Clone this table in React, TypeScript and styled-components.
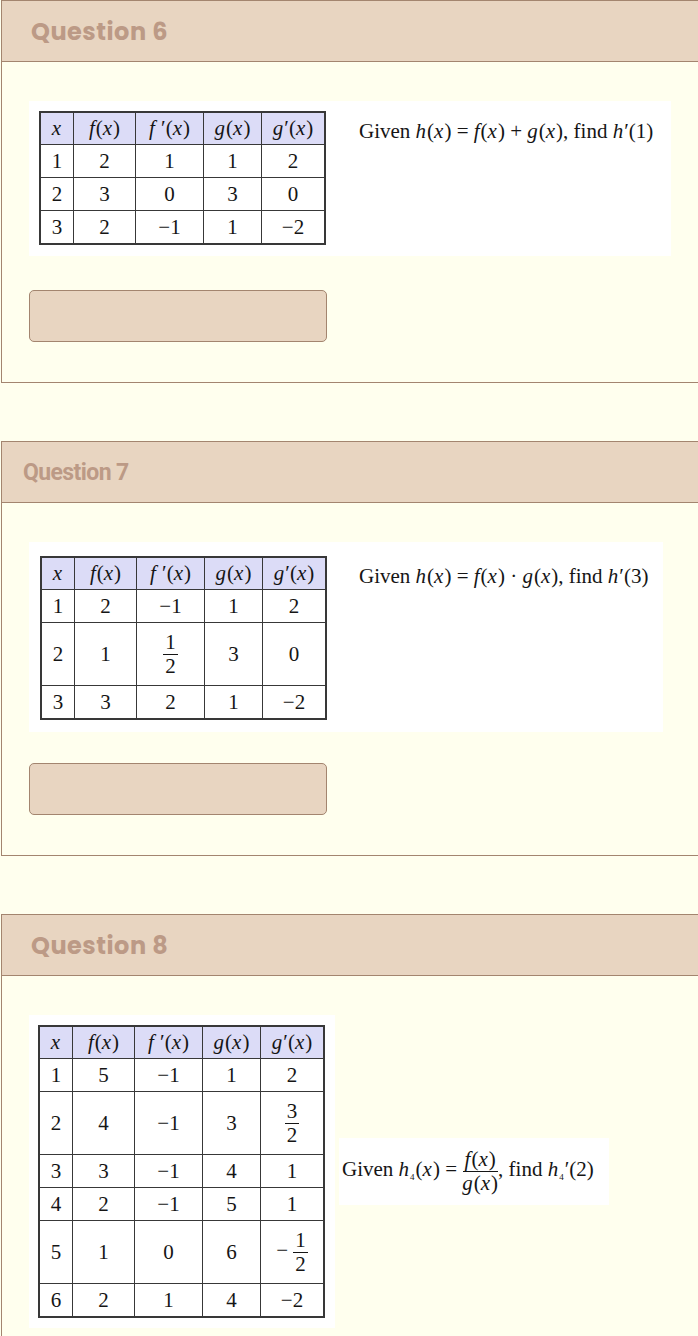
import React from "react";
import styled, { createGlobalStyle } from "styled-components";

type Cell = React.ReactNode;

const GlobalStyle = createGlobalStyle`
  html, body {
    margin: 0;
    padding: 0;
    background: #ffffee;
    overflow-x: hidden;
  }
`;

const Page = styled.main`
  width: 698px;
  background: #ffffee;
`;

const Card = styled.section`
  margin: 0 0 58px 1px;
  border: 1px solid #a3856f;
  border-right: none;
`;

const Header = styled.header<{ $alt?: boolean }>`
  height: 60px;
  display: flex;
  align-items: center;
  padding-left: ${(p) => (p.$alt ? 21 : 29)}px;
  background: #e8d5c1;
  border-bottom: 1px solid #a3856f;
`;

const Title = styled.h2<{ $alt?: boolean }>`
  margin: 0;
  font-family: ${(p) => (p.$alt ? '"Roboto"' : '"Poppins", "Open Sans"')}, sans-serif;
  font-weight: 700;
  font-size: ${(p) => (p.$alt ? 23 : 24)}px;
  letter-spacing: ${(p) => (p.$alt ? -0.6 : 0.5)}px;
  color: #bc9a86;
`;

const Body = styled.div`
  padding: 39px 0 40px 27px;
`;

const Figure = styled.div<{ $w: number; $pad: string }>`
  display: flex;
  align-items: flex-start;
  width: ${(p) => p.$w}px;
  padding: ${(p) => p.$pad};
  box-sizing: border-box;
  background: #ffffff;
`;

const SplitRow = styled.div`
  display: flex;
  align-items: center;
  gap: 4px;
`;

const TableBox = styled.div`
  padding: 10px 10px 10px 9px;
  background: #ffffff;
`;

const TextBox = styled.div`
  display: flex;
  align-items: center;
  width: 270px;
  height: 67px;
  padding-left: 3px;
  box-sizing: border-box;
  background: #ffffff;
`;

const Grid = styled.table`
  border-collapse: collapse;
  table-layout: fixed;
  border: 2px solid #383838;
  color: #151515;
`;

const cellFont = `
  font-family: "Liberation Serif", "Times New Roman", serif;
  font-size: 21px;
  color: #151515;
`;

const Th = styled.th<{ $w: number }>`
  ${cellFont}
  width: ${(p) => p.$w}px;
  height: 31px;
  padding: 0;
  font-weight: 400;
  text-align: center;
  background: #dcdcf7;
  border: 1px solid #383838;
`;

const Td = styled.td<{ $tall?: boolean }>`
  ${cellFont}
  height: ${(p) => (p.$tall ? 62 : 32)}px;
  padding: 0;
  text-align: center;
  border: 1px solid #383838;
`;

const I = styled.i`
  font-style: italic;
  padding-right: 1px;
`;

const Frac = styled.span`
  display: inline-flex;
  flex-direction: column;
  align-items: center;
  vertical-align: middle;
  line-height: 23px;
`;

const Num = styled.span`
  padding: 0 2px;
  border-bottom: 1px solid currentColor;
`;

const Statement = styled.p<{ $top?: number; $left?: number }>`
  margin: ${(p) => p.$top ?? 0}px 0 0 ${(p) => p.$left ?? 0}px;
  font-family: "Liberation Serif", "Times New Roman", serif;
  font-size: 21px;
  line-height: 24px;
  color: #151515;
  white-space: nowrap;
`;

const Sub = styled.sub`
  font-size: 9px;
  vertical-align: -4px;
  margin-right: 1px;
`;

const AnswerBox = styled.input<{ $top: number }>`
  display: block;
  width: 298px;
  height: 52px;
  margin-top: ${(p) => p.$top}px;
  box-sizing: border-box;
  background: #e8d5c1;
  border: 1px solid #a3856f;
  border-radius: 5px;
  outline: none;
`;

const fx = (
  <>
    <I>f</I>(<I>x</I>)
  </>
);
const gx = (
  <>
    <I>g</I>(<I>x</I>)
  </>
);

// column widths measured off the table pictures
const heads: [Cell, number][] = [
  [<I>x</I>, 32],
  [fx, 61],
  [
    <>
      <I>f</I> ′(<I>x</I>)
    </>,
    67,
  ],
  [gx, 57],
  [
    <>
      <I>g</I>′(<I>x</I>)
    </>,
    62,
  ],
];

const frac = (n: Cell, d: Cell) => (
  <Frac>
    <Num>{n}</Num>
    <span>{d}</span>
  </Frac>
);

function ValueTable({ rows }: { rows: { cells: Cell[]; tall?: boolean }[] }) {
  return (
    <Grid>
      <thead>
        <tr>
          {heads.map(([h, w], i) => (
            <Th key={i} $w={w}>
              {h}
            </Th>
          ))}
        </tr>
      </thead>
      <tbody>
        {rows.map((r, i) => (
          <tr key={i}>
            {r.cells.map((c, j) => (
              <Td key={j} $tall={r.tall}>
                {c}
              </Td>
            ))}
          </tr>
        ))}
      </tbody>
    </Grid>
  );
}

const q6 = [
  { cells: ["1", "2", "1", "1", "2"] },
  { cells: ["2", "3", "0", "3", "0"] },
  { cells: ["3", "2", "−1", "1", "−2"] },
];

const q7 = [
  { cells: ["1", "2", "−1", "1", "2"] },
  { cells: ["2", "1", frac("1", "2"), "3", "0"], tall: true },
  { cells: ["3", "3", "2", "1", "−2"] },
];

const q8 = [
  { cells: ["1", "5", "−1", "1", "2"] },
  { cells: ["2", "4", "−1", "3", frac("3", "2")], tall: true },
  { cells: ["3", "3", "−1", "4", "1"] },
  { cells: ["4", "2", "−1", "5", "1"] },
  {
    cells: [
      "5",
      "1",
      "0",
      "6",
      <>
        − {frac("1", "2")}
      </>,
    ],
    tall: true,
  },
  { cells: ["6", "2", "1", "4", "−2"] },
];

function Question({
  n,
  alt,
  children,
  answer,
}: {
  n: number;
  alt?: boolean;
  children: React.ReactNode;
  answer?: number;
}) {
  return (
    <Card>
      <Header $alt={alt}>
        <Title $alt={alt}>Question {n}</Title>
      </Header>
      <Body>
        {children}
        {answer !== undefined && <AnswerBox $top={answer} aria-label={`Answer ${n}`} />}
      </Body>
    </Card>
  );
}

export default function App() {
  return (
    <Page>
      <GlobalStyle />
      <Question n={6} answer={34}>
        <Figure $w={642} $pad="10px 0 11px 10px">
          <ValueTable rows={q6} />
          <Statement $top={8} $left={33}>
            Given <I>h</I>(<I>x</I>) = {fx} + {gx}, find <I>h</I>′(1)
          </Statement>
        </Figure>
      </Question>
      <Question n={7} alt answer={31}>
        <Figure $w={634} $pad="14px 0 12px 11px">
          <ValueTable rows={q7} />
          <Statement $top={8} $left={32}>
            Given <I>h</I>(<I>x</I>) = {fx} · {gx}, find <I>h</I>′(3)
          </Statement>
        </Figure>
      </Question>
      <Question n={8}>
        <SplitRow>
          <TableBox>
            <ValueTable rows={q8} />
          </TableBox>
          <TextBox>
            <Statement>
              Given <I>h</I>
              <Sub>4</Sub>(<I>x</I>) = {frac(fx, gx)}, find <I>h</I>
              <Sub>4</Sub>′(2)
            </Statement>
          </TextBox>
        </SplitRow>
      </Question>
    </Page>
  );
}
